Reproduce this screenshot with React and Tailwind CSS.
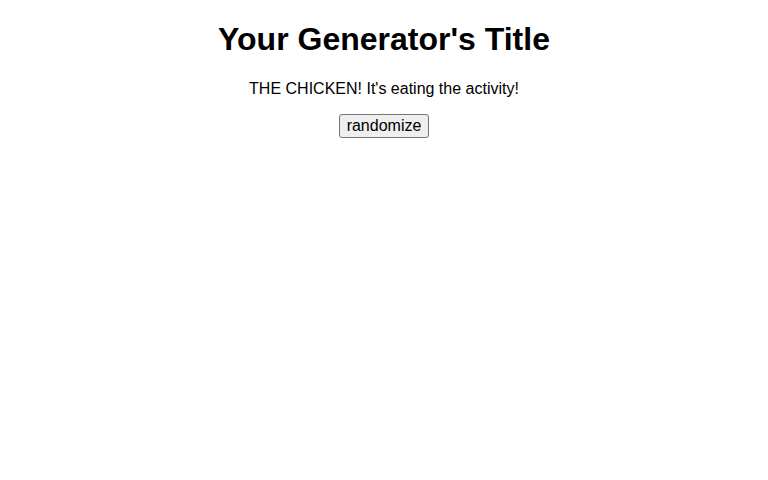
import React, { useState } from 'react';

const lines = [
  "THE CHICKEN! It's eating the activity!",
  "THE DRAGON! It's eating the homework!",
  "THE ROBOT! It's dancing with the teacher!",
];

export default function App() {
  const [i, setI] = useState(0);

  return (
    <div className="min-h-[480px] bg-white px-2 pt-[21px] text-center text-black font-['Liberation_Sans',Arial,sans-serif]">
      <h1 className="text-[32px] font-bold leading-[37px]">Your Generator's Title</h1>
      <p className="mt-[22px] text-[16px] leading-[18px]">{lines[i]}</p>
      <div className="mt-[16px]">
        <button
          onClick={() => setI((i + 1) % lines.length)}
          className="rounded-[3px] border border-[#767676] bg-[#efefef] px-[7px] py-[2px] text-[16px] leading-[18px] text-black"
        >
          randomize
        </button>
      </div>
    </div>
  );
}
